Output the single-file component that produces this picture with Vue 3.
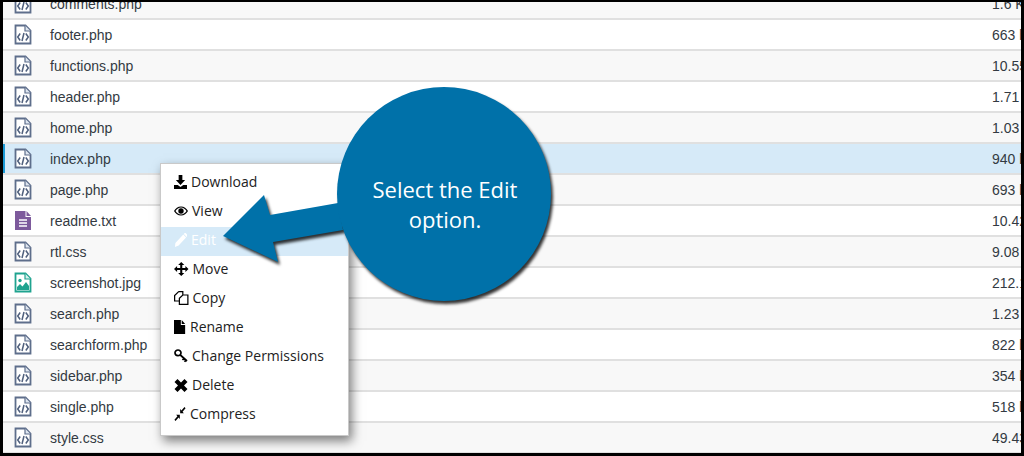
<script setup>
const files = [
  { name: 'comments.php', size: '1.6 KB', type: 'code' },
  { name: 'footer.php', size: '663 bytes', type: 'code' },
  { name: 'functions.php', size: '10.55 KB', type: 'code' },
  { name: 'header.php', size: '1.71 KB', type: 'code' },
  { name: 'home.php', size: '1.03 KB', type: 'code' },
  { name: 'index.php', size: '940 bytes', type: 'code', selected: true },
  { name: 'page.php', size: '693 bytes', type: 'code' },
  { name: 'readme.txt', size: '10.42 KB', type: 'text' },
  { name: 'rtl.css', size: '9.08 KB', type: 'code' },
  { name: 'screenshot.jpg', size: '212.1 KB', type: 'image' },
  { name: 'search.php', size: '1.23 KB', type: 'code' },
  { name: 'searchform.php', size: '822 bytes', type: 'code' },
  { name: 'sidebar.php', size: '354 bytes', type: 'code' },
  { name: 'single.php', size: '518 bytes', type: 'code' },
  { name: 'style.css', size: '49.43 KB', type: 'code' },
]

// icon paths are drawn in a 14x14 box
const menuItems = [
  {
    label: 'Download',
    width: 13,
    path: 'M5 0h4v5h3L7 10 2 5h3zM0 10h4l3 2 3-2h4v4H0z',
  },
  {
    label: 'View',
    width: 14,
    path: 'M7 2.500c3 0 5.600 1.800 7 4.500-1.400 2.700-4 4.500-7 4.500S1.400 9.700 0 7c1.400-2.700 4-4.500 7-4.500zm0 1.100C4.900 3.600 3 4.900 1.500 7 3 9.100 4.900 10.400 7 10.400s4-1.300 5.500-3.400C11 4.900 9.100 3.600 7 3.600zM7 4.300a2.700 2.700 0 1 1 0 5.400 2.700 2.700 0 0 1 0-5.400z',
  },
  {
    label: 'Edit',
    width: 13,
    active: true,
    path: 'M10 1.500l3 3L5 12.500 1 14l.5-4zM11 .5c.6-.6 1.400-.6 2 0l1 1c.6.600.6 1.400 0 2l-.4.400-3-3z',
  },
  {
    label: 'Move',
    width: 14.5,
    path: 'M7 0l3 3H8v3h3V4l3 3-3 3V8H8v3h2l-3 3-3-3h2V8H3v2L0 7l3-3v2h3V3H4z',
  },
  {
    label: 'Copy',
    width: 14.5,
    outline: true,
    path: 'M4.500.6h4v3.400M4.500.6L.6 4.500v5.500H5M8.500 4h4.900v9.400H5.200V7.300z',
  },
  {
    label: 'Rename',
    width: 12,
    path: 'M0 0h8v5h5v9H0zM9 0l4 4H9z',
  },
  {
    label: 'Change Permissions',
    width: 14,
    outline: true,
    thick: true,
    path: 'M1 3.800a3 2.800 0 1 0 6 0a3 2.800 0 1 0-6 0zM6.300 6l6.700 6M10 9.300l-1.500 1.700M12 11l-1.500 1.800',
  },
  {
    label: 'Delete',
    width: 14,
    path: 'M3.500 1L7 4.500 10.500 1 13.500 4 10 7.500l3.500 3.500-3 3L7 10.500 3.500 14l-3-3L4 7.500.500 4z',
  },
  {
    label: 'Compress',
    width: 12,
    path: 'M13.500 1.200L10 4.700l1.500 1.500H7.200V2l1.500 1.500L12.200 0zM.500 12.800L4 9.300 2.500 7.800h4.300V12l-1.500-1.500L1.800 14z',
  },
]
</script>

<template>
  <div class="frame">
    <div class="list">
      <div
        v-for="file in files"
        :key="file.name"
        class="row"
        :class="{ selected: file.selected }"
      >
        <svg class="file-icon" width="18" height="21" viewBox="0 0 18 21">
          <template v-if="file.type === 'code'">
            <path d="M1.500 1.500h10l5 5v13h-15z" fill="#fff" stroke="#5e6e8b" stroke-width="1.800" />
            <path d="M11 1.500v5.500h5.500" fill="#dfe6f0" stroke="#5e6e8b" stroke-width="1.200" />
            <path d="M6.200 9.500L3.700 13l2.500 3.500M11.800 9.500l2.500 3.500-2.500 3.500M10 9l-2 8" fill="none" stroke="#4f5f7c" stroke-width="1.500" />
          </template>
          <template v-else-if="file.type === 'text'">
            <path d="M1 1h10.500v6H17v13H1z" fill="#7d5a9c" />
            <path d="M12.500 1L17 6h-4.500z" fill="#7d5a9c" />
            <path d="M5 10h8M5 13h8M5 16h8" stroke="#fff" stroke-width="1.500" />
          </template>
          <template v-else>
            <path d="M1.500 1.500h10l5 5v13h-15z" fill="#fff" stroke="#1fa38f" stroke-width="1.800" />
            <path d="M11 1.500v5.500h5.500" fill="#d7f0ec" stroke="#1fa38f" stroke-width="1.200" />
            <path d="M3 18v-3l3-3 2.500 2.500L12 10l3 4v4z" fill="#1fa38f" />
            <circle cx="6" cy="8.500" r="1.700" fill="#1fa38f" />
          </template>
        </svg>
        <span class="name">{{ file.name }}</span>
        <span class="size">{{ file.size }}</span>
      </div>
    </div>

    <ul class="menu">
      <li
        v-for="item in menuItems"
        :key="item.label"
        class="menu-item"
        :class="{ active: item.active }"
      >
        <svg class="menu-icon" :width="item.width" height="14" viewBox="0 0 14 14" preserveAspectRatio="none">
          <path
            :d="item.path"
            :fill="item.outline ? 'none' : 'currentColor'"
            :stroke="item.outline ? 'currentColor' : 'none'"
            :stroke-width="item.thick ? 1.700 : item.outline ? 1.200 : 0"
            fill-rule="evenodd"
          />
        </svg>
        <span>{{ item.label }}</span>
      </li>
    </ul>

    <div class="callout">
      <svg class="callout-shape" width="340" height="230" viewBox="0 0 340 230">
        <path
          d="M3 148L44 107 50 127 118 115 123 142 53 154 58 174z"
          fill="#0071a9"
        />
        <circle cx="224" cy="106" r="107" fill="#0071a9" />
      </svg>
      <p class="callout-text">Select the Edit<br />option.</p>
    </div>
  </div>
</template>

<style scoped>
.frame {
  position: relative;
  box-sizing: border-box;
  width: 1024px;
  height: 456px;
  overflow: hidden;
  background: #fff;
  border-style: solid;
  border-color: #000;
  border-width: 2px 3px 3px 3px;
  font-family: "Liberation Sans", Arial, sans-serif;
}

.list {
  margin-top: -13px;
}

.row {
  box-sizing: border-box;
  display: grid;
  grid-template-columns: 47px 942px auto;
  align-items: center;
  height: 31px;
  border-bottom: 2px solid #e0e0e0;
  font-size: 14px;
  color: #333a42;
  white-space: nowrap;
}

.row:nth-child(odd) {
  background: #f8f8f8;
}

.row.selected {
  background: #d6eaf8;
  box-shadow: inset 2px 0 0 #1b9ad6;
}

.file-icon {
  margin-left: 11px;
}

.menu {
  position: absolute;
  left: 157px;
  top: 161px;
  box-sizing: border-box;
  width: 189px;
  margin: 0;
  padding: 5px 0;
  list-style: none;
  background: #fff;
  border: 1px solid #c9c9c9;
  box-shadow: 3px 5px 10px rgba(0, 0, 0, 0.5);
  font-family: "Open Sans", sans-serif;
  font-size: 14px;
  color: #222;
}

.menu-item {
  box-sizing: border-box;
  display: flex;
  align-items: center;
  gap: 4px;
  height: 29px;
  padding: 0 0 4px 13px;
}

.menu-item.active {
  background: #d6eaf8;
  color: #fff;
}

.menu-icon {
  color: #000;
  flex: none;
}

.menu-item.active .menu-icon {
  color: #fff;
}

.callout {
  position: absolute;
  left: 217px;
  top: 86px;
  width: 340px;
  height: 230px;
}

.callout-shape {
  display: block;
  overflow: visible;
  filter: drop-shadow(2px 3px 1.500px rgba(0, 0, 0, 0.8));
}

.callout-text {
  position: absolute;
  left: 120px;
  top: 86px;
  width: 210px;
  margin: 0;
  font-family: "Open Sans", sans-serif;
  font-size: 22px;
  line-height: 30px;
  text-align: center;
  color: #fff;
}
</style>
